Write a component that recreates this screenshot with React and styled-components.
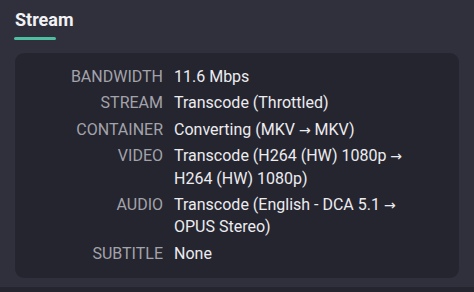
import React from 'react';
import styled, { createGlobalStyle } from 'styled-components';

const GlobalStyle = createGlobalStyle`
  html, body {
    margin: 0;
    padding: 0;
    background: #25252f;
  }
  body {
    font-family: Roboto, "Noto Sans", "Liberation Sans", sans-serif;
  }
`;

const rows = [
  { label: 'Bandwidth', value: ['11.6 Mbps'] },
  { label: 'Stream', value: ['Transcode (Throttled)'] },
  { label: 'Container', value: ['Converting (MKV', ' MKV)'] },
  { label: 'Video', value: ['Transcode (H264 (HW) 1080p', ' H264 (HW) 1080p)'] },
  { label: 'Audio', value: ['Transcode (English - DCA 5.1', ' OPUS Stereo)'] },
  { label: 'Subtitle', value: ['None'] },
];

const App = () => {
  return (
    <>
      <GlobalStyle />
      <Section>
        <Heading>Stream</Heading>
        <Card>
          <InfoGrid>
            {rows.map((row) => (
              <React.Fragment key={row.label}>
                <Label>{row.label}</Label>
                <Value>
                  {row.value[0]}
                  {row.value.length > 1 && (
                    <>
                      {' '}
                      <Arrow>→</Arrow>
                      {row.value[1]}
                    </>
                  )}
                </Value>
              </React.Fragment>
            ))}
          </InfoGrid>
        </Card>
      </Section>
    </>
  );
};

export default App;

const Section = styled.section`
  height: 287px;
  box-sizing: border-box;
  background: #30303c;
  padding: 7px 15px 0 15px;
  display: flex;
  flex-direction: column;
`;

const Heading = styled.h2`
  margin: 0 0 9px 0;
  font-size: 18px;
  font-weight: 700;
  line-height: 26px;
  color: #f2f2f5;
  padding-bottom: 4px;

  &::after {
    content: '';
    display: block;
    width: 42px;
    height: 3px;
    border-radius: 2px;
    background: #4fbd9f;
    margin: 4px 0 0 -1px;
  }
`;

const Card = styled.div`
  background: #25252f;
  border-radius: 9px;
  padding: 13px 30px 13px 16px;
`;

const InfoGrid = styled.div`
  display: grid;
  grid-template-columns: 132px 1fr;
  column-gap: 11px;
  row-gap: 4px;
  font-size: 16px;
  line-height: 1.4;
`;

const Label = styled.div`
  text-align: right;
  text-transform: uppercase;
  color: #a3a3ab;
  white-space: nowrap;
`;

const Value = styled.div`
  color: #ececf0;
`;

const Arrow = styled.span`
  font-family: "DejaVu Sans", sans-serif;
  font-size: 14px;
`;
